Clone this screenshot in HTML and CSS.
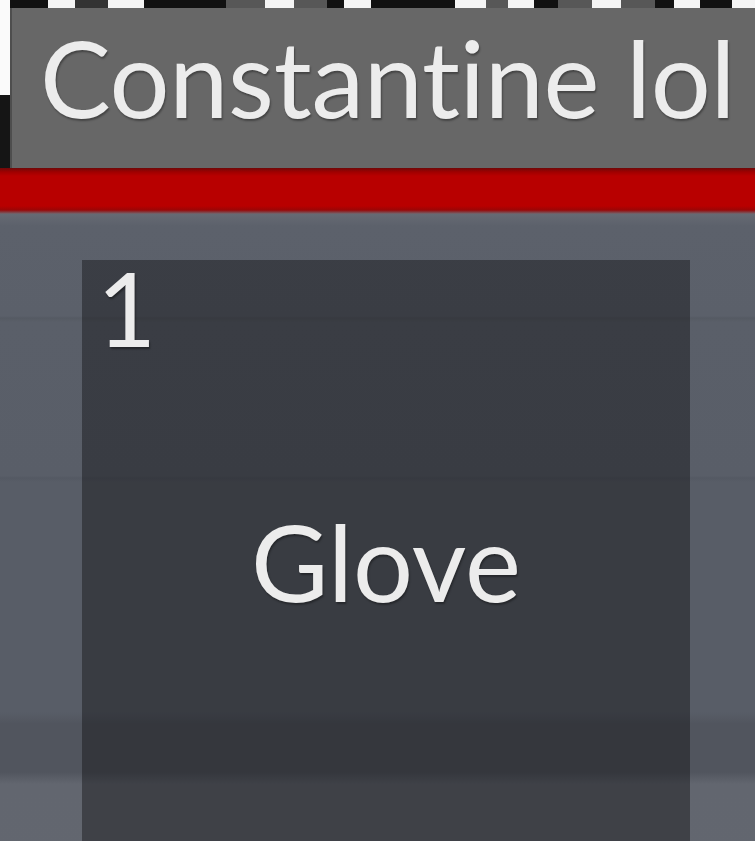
FILE: index.html
```html
<!DOCTYPE html>
<html>
<head>
    <meta charset="UTF-8">
    <title>Hotbar</title>
    <link rel="stylesheet" href="styles.css">
</head>
<body>
    <div class="header">
        <div class="edge"></div>
        <div class="tag-col">
            <div class="overhang"></div>
            <div class="nameplate">
                <span class="name">Constantine lol</span>
            </div>
        </div>
    </div>
    <div class="health"></div>
    <div class="backpack">
        <div class="slot">
            <span class="slot-key">1</span>
            <span class="slot-name">Glove</span>
        </div>
    </div>
</body>
</html>
```

FILE: styles.css
```css
html, body {
    margin: 0;
    padding: 0;
    height: 100%;
    overflow: hidden;
}
body {
    font-family: Lato, "Open Sans", sans-serif;
    font-variant-ligatures: none;
    background-color: #5a5f69;
    color: #ececec;
}
.header {
    display: flex;
    height: 168px;
}
.edge {
    width: 10px;
    background: linear-gradient(to bottom, #fafafa 0, #fafafa 95px, #151515 95px, #151515 100%);
}
.tag-col {
    flex: 1;
    display: flex;
    flex-direction: column;
}
.overhang {
    height: 8px;
    background: linear-gradient(to right,
        #111 0, #111 38px, #f4f4f4 38px, #f4f4f4 65px,
        #333 65px, #333 98px, #f4f4f4 98px, #f4f4f4 134px,
        #111 134px, #111 216px, #575757 216px, #575757 255px,
        #f4f4f4 255px, #f4f4f4 284px, #575757 284px, #575757 317px,
        #111 317px, #111 334px, #f4f4f4 334px, #f4f4f4 361px,
        #111 361px, #111 445px, #f4f4f4 445px, #f4f4f4 476px,
        #575757 476px, #575757 498px, #f4f4f4 498px, #f4f4f4 524px,
        #111 524px, #111 548px, #575757 548px, #575757 582px,
        #f4f4f4 582px, #f4f4f4 611px, #575757 611px, #575757 645px,
        #111 645px, #111 664px, #f4f4f4 664px, #f4f4f4 690px,
        #111 690px, #111 722px, #f4f4f4 722px, #f4f4f4 100%);
}
.nameplate {
    flex: 1;
    padding: 16px 0 0 28px;
    background-color: #676767;
    border-left: 2px solid #4e4e4e;
}
.name {
    display: block;
    font-size: 106px;
    line-height: 1;
    letter-spacing: -0.3px;
    white-space: nowrap;
    text-shadow: 1px 2px 2px rgba(0, 0, 0, 0.35);
}
.health {
    height: 46px;
    background: linear-gradient(to bottom, #6e0a0a 0, #a00000 4px, #b80000 8px, #b80000 38px, #9a0606 42px, #6f6a72 46px);
}
.backpack {
    padding: 46px 0 0 82px;
    height: 100%;
    background: linear-gradient(to bottom,
        #666a73 0, #5c616b 12px, #5b606a 102px, #555a63 104px, #5a5f69 108px,
        #595e68 262px, #545963 264px, #585d67 268px,
        #585d67 498px, #51555e 510px, #51555e 558px, #62666f 570px, #63676f 100%);
}
.slot {
    position: relative;
    width: 608px;
    height: 608px;
    display: flex;
    align-items: center;
    justify-content: center;
    background-color: rgba(14, 14, 16, 0.42);
}
.slot-key {
    position: absolute;
    top: -3px;
    left: 15px;
    font-size: 102px;
    line-height: 1;
    text-shadow: 1px 2px 2px rgba(0, 0, 0, 0.4);
}
.slot-name {
    margin-bottom: 7px;
    font-size: 106px;
    line-height: 1;
    text-shadow: 1px 2px 2px rgba(0, 0, 0, 0.35);
}
```
